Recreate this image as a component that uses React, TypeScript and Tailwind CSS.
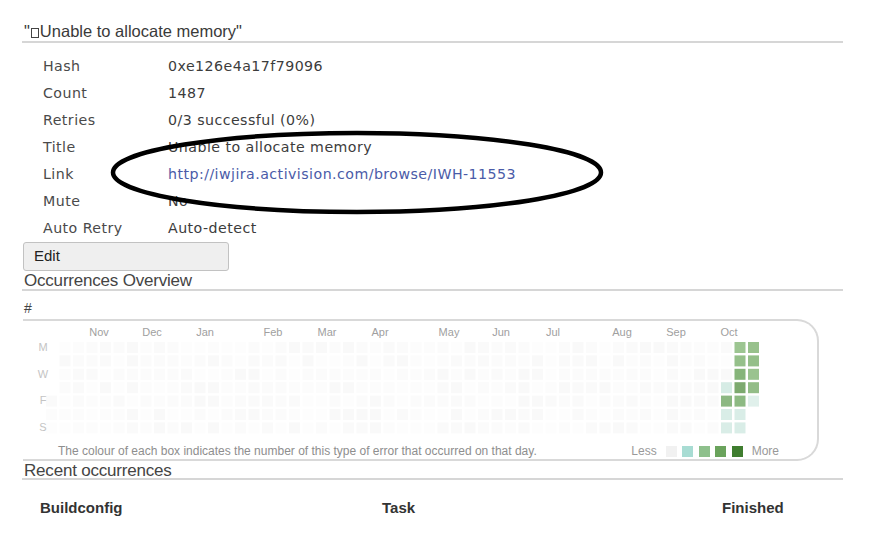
import React from "react";

const months: [string, number][] = [
  ["Nov", 99], ["Dec", 152], ["Jan", 205], ["Feb", 273], ["Mar", 327], ["Apr", 380],
  ["May", 449], ["Jun", 501], ["Jul", 553], ["Aug", 622], ["Sep", 676], ["Oct", 729],
];

const special: Record<string, string> = {
  "50-3": "#d6ece5",
  "50-4": "#8cb882",
  "50-5": "#d9ede7",
  "50-6": "#d9ede7",
  "51-0": "#9cc591",
  "51-1": "#95c08a",
  "51-2": "#86b57a",
  "51-3": "#7daa6f",
  "51-4": "#8dba83",
  "51-5": "#d9ede7",
  "51-6": "#d9ede7",
  "52-0": "#98c18c",
  "52-1": "#94bf89",
  "52-2": "#9ac38f",
  "52-3": "#93bd87",
  "52-4": "#e0f0eb",
};

function faint(c: number, r: number) {
  const v = Math.sin(c * 12.9898 + r * 78.233) * 43758.5453;
  const f = v - Math.floor(v);
  const shades = ["#fcfcfc", "#fafafa", "#fbfbfb", "#f9f9f9", "#fdfdfd"];
  return shades[Math.floor(f * shades.length)];
}

function Heatmap() {
  const cells: React.ReactNode[] = [];
  for (let c = 0; c < 53; c++) {
    for (let r = 0; r < 7; r++) {
      if (c === 0 && r < 4) continue;
      if (c === 52 && r > 4) continue;
      const key = `${c}-${r}`;
      const fill = special[key] ?? faint(c, r);
      cells.push(
        <rect key={key} x={23 + c * 13.5} y={21 + r * 13.4} width={11} height={11} fill={fill} />
      );
    }
  }
  return (
    <svg width={780} height={114} className="block" style={{ fontFamily: '"Liberation Sans", Arial, sans-serif' }}>
      {months.map(([m, x]) => (
        <text key={m} x={x - 23} y={15} fontSize={11} fill="#a0a0a0" textAnchor="middle">
          {m}
        </text>
      ))}
      {cells}
      {[["M", 30], ["W", 57], ["F", 83], ["S", 110]].map(([d, y]) => (
        <text key={d as string} x={20} y={y as number} fontSize={11} fill="#c4c4c4" textAnchor="middle">
          {d}
        </text>
      ))}
    </svg>
  );
}

const rows: [string, React.ReactNode][] = [
  ["Hash", "0xe126e4a17f79096"],
  ["Count", "1487"],
  ["Retries", "0/3 successful (0%)"],
  ["Title", "Unable to allocate memory"],
  ["Link", <span className="text-[#4a5ba8]">http://iwjira.activision.com/browse/IWH-11553</span>],
  ["Mute", "No"],
  ["Auto Retry", "Auto-detect"],
];

export default function App() {
  return (
    <div
      className="relative w-[877px] h-[537px] bg-white overflow-hidden text-[#333]"
      style={{ fontFamily: '"Liberation Sans", Arial, sans-serif' }}
    >
      <div className="ml-[22px] w-[821px] pt-[22px]">
        <div className="h-[19px] leading-[19px] text-[16.5px] pl-[2px] text-[#3a3a3a] flex items-center">
          <span>"</span>
          <span className="inline-block w-[8px] h-[10px] border border-[#444] mx-[1px] mt-[2px]" />
          <span>Unable to allocate memory"</span>
        </div>
        <div className="h-[2px] bg-[#d6d6d6]" />

        <div
          className="mt-[9.5px] pl-[21px] text-[14.2px] tracking-[0.45px] text-[#3c3c3c]"
          style={{ fontFamily: '"DejaVu Sans", Verdana, sans-serif' }}
        >
          {rows.map(([k, v]) => (
            <div key={k} className="flex h-[27px] leading-[27px]">
              <div className="w-[125px] text-[#4a4a4a]">{k}</div>
              <div>{v}</div>
            </div>
          ))}
        </div>

        <button className="ml-[1px] mt-[0.5px] h-[29px] w-[206px] text-left pl-[10px] text-[15px] text-[#222] bg-[#efefef] border border-[#c2c2c2] rounded-[3px] block">
          Edit
        </button>

        <div className="h-[18px] leading-[19px] text-[17px] pl-[2px] text-[#444] tracking-[-0.2px]">
          Occurrences Overview
        </div>
        <div className="h-[2px] bg-[#d6d6d6]" />

        <div className="h-[28px] pt-[9px] leading-[16px] text-[14px] pl-[2px] text-[#444]">#</div>

        <div className="ml-[1px] w-[796px] h-[142px] border-t-2 border-b-2 border-r-2 border-[#d9d9d9] rounded-r-[22px]">
          <Heatmap />
          <div className="h-[24px] pt-[8px] leading-[16px] flex text-[12px]">
            <div className="pl-[35px] text-[#8e8e8e]">
              The colour of each box indicates the number of this type of error that occurred on that day.
            </div>
            <div className="ml-auto mr-[38px] flex items-center text-[#999]">
              <span>Less</span>
              <div className="ml-[9px] flex gap-[5.5px]">
                <div className="w-[11px] h-[11px] bg-[#f1f1f1]" />
                <div className="w-[11px] h-[11px] bg-[#a8dcd3]" />
                <div className="w-[11px] h-[11px] bg-[#8ec08c]" />
                <div className="w-[11px] h-[11px] bg-[#6aa35c]" />
                <div className="w-[11px] h-[11px] bg-[#3f7d2f]" />
              </div>
              <span className="ml-[9px]">More</span>
            </div>
          </div>
        </div>

        <div className="h-[17px] leading-[20px] text-[17px] pl-[2px] text-[#444] tracking-[-0.2px]">
          Recent occurrences
        </div>
        <div className="h-[2px] bg-[#d6d6d6]" />

        <div className="mt-[19px] h-[18px] leading-[18px] flex text-[15px] font-bold text-[#333] pl-[18px]">
          <div className="w-[342px]">Buildconfig</div>
          <div className="w-[340px]">Task</div>
          <div>Finished</div>
        </div>
      </div>

      <svg className="absolute left-0 top-0 pointer-events-none" width={877} height={537}>
        <ellipse cx={357} cy={172.5} rx={244} ry={39.5} fill="none" stroke="#000" strokeWidth={4.5} />
      </svg>
    </div>
  );
}
